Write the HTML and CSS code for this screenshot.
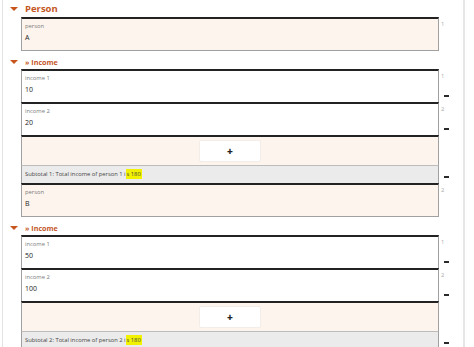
FILE: index.html
```html
<!DOCTYPE html>
<html>
<head>
<meta charset="utf-8">
<link rel="stylesheet" href="styles.css">
</head>
<body>
<div class="page">
  <div class="head big"><span class="tri"></span><span>Person</span></div>

  <div class="rep">
    <div class="rep-body">
      <div class="field peach closed">
        <div class="lbl">person</div>
        <div class="val">A</div>
      </div>
      <div class="head sub"><span class="tri"></span><span>» Income</span></div>
      <div class="rep">
        <div class="rep-body"><div class="field"><div class="lbl">income 1</div><div class="val">10</div></div></div>
        <div class="gutter"><span class="num">1</span><span class="rm"></span></div>
      </div>
      <div class="rep">
        <div class="rep-body"><div class="field"><div class="lbl">income 2</div><div class="val">20</div></div></div>
        <div class="gutter"><span class="num">2</span><span class="rm"></span></div>
      </div>
      <div class="addrow"><button class="add">+</button></div>
      <div class="subtotal">Subtotal 1: Total income of person 1 i<span class="hl">s 180</span></div>
    </div>
    <div class="gutter"><span class="num">1</span><span class="rm"></span></div>
  </div>

  <div class="rep">
    <div class="rep-body">
      <div class="field peach closed">
        <div class="lbl">person</div>
        <div class="val">B</div>
      </div>
      <div class="head sub"><span class="tri"></span><span>» Income</span></div>
      <div class="rep">
        <div class="rep-body"><div class="field"><div class="lbl">income 1</div><div class="val">50</div></div></div>
        <div class="gutter"><span class="num">1</span><span class="rm"></span></div>
      </div>
      <div class="rep">
        <div class="rep-body"><div class="field"><div class="lbl">income 2</div><div class="val">100</div></div></div>
        <div class="gutter"><span class="num">2</span><span class="rm"></span></div>
      </div>
      <div class="addrow"><button class="add">+</button></div>
      <div class="subtotal">Subtotal 2: Total income of person 2 i<span class="hl">s 180</span></div>
    </div>
    <div class="gutter"><span class="num">2</span><span class="rm"></span></div>
  </div>
</div>
</body>
</html>
```

FILE: styles.css
```css
html, body {
  margin: 0;
  padding: 0;
  background: #fff;
  height: 347px;
  overflow: hidden;
}
body {
  font-family: "Open Sans", "Liberation Sans", sans-serif;
  color: #222;
}
.page {
  margin-left: 2px;
  width: 454px;
  min-height: 347px;
  border-left: 1px solid #e2e2e2;
  border-right: 2px solid #e6e6e6;
  padding-left: 6px;
  box-sizing: content-box;
}
.head {
  display: flex;
  align-items: center;
  color: #c4571f;
  font-weight: 700;
}
.head.big {
  font-size: 9.5px;
  line-height: 12px;
  padding-top: 3px;
  margin-bottom: 2px;
}
.head.sub {
  font-size: 7.2px;
  line-height: 12px;
  margin: 5px 0 1px -12px;
}
.tri {
  width: 0;
  height: 0;
  border-left: 4px solid transparent;
  border-right: 4px solid transparent;
  border-top: 4.5px solid #c8541c;
  margin-left: 1px;
  margin-right: 7px;
}
.rep {
  display: flex;
  margin-left: 12px;
}
.rep-body .rep {
  margin-left: 0;
}
.rep-body {
  width: 418px;
  flex: none;
}
.gutter {
  width: 18px;
  flex: none;
  display: flex;
  flex-direction: column;
  justify-content: space-between;
  padding: 4px 0 5px 2px;
  box-sizing: border-box;
}
.num {
  font-size: 5.8px;
  line-height: 7px;
  color: #aaa;
}
.rm {
  display: block;
  width: 5px;
  height: 2px;
  background: #2a2a2a;
  margin-left: 3px;
}
.field {
  border-top: 2px solid #222;
  border-left: 1px solid #a0a0a0;
  border-right: 1px solid #a0a0a0;
  padding: 4px 3px 8px;
  background: #fff;
}
.field.peach {
  background: #fdf4ed;
}
.field.closed {
  border-bottom: 1px solid #a0a0a0;
}
.lbl {
  font-size: 5.8px;
  line-height: 7px;
  color: #7a7a7a;
}
.val {
  font-size: 7px;
  line-height: 9px;
  margin-top: 3px;
  color: #1e1e1e;
}
.addrow {
  background: #fdf4ed;
  border-top: 2px solid #222;
  border-left: 1px solid #a0a0a0;
  border-right: 1px solid #a0a0a0;
  display: flex;
  justify-content: center;
  padding: 3px 0 3px;
}
.add {
  width: 62px;
  height: 22px;
  background: #fff;
  border: 1px solid #f2ede9;
  border-radius: 2px;
  font-family: "Open Sans", "Liberation Sans", sans-serif;
  font-size: 10px;
  font-weight: 800;
  color: #222;
  padding: 0;
  line-height: 20px;
}
.subtotal {
  background: #ebebeb;
  border-top: 1px solid #bcbcbc;
  border-left: 1px solid #a0a0a0;
  border-right: 1px solid #a0a0a0;
  font-size: 5.8px;
  line-height: 17px;
  height: 17px;
  padding-left: 3px;
  color: #444;
}
.hl {
  background: #f2f200;
  padding: 1px 1px;
}
```
